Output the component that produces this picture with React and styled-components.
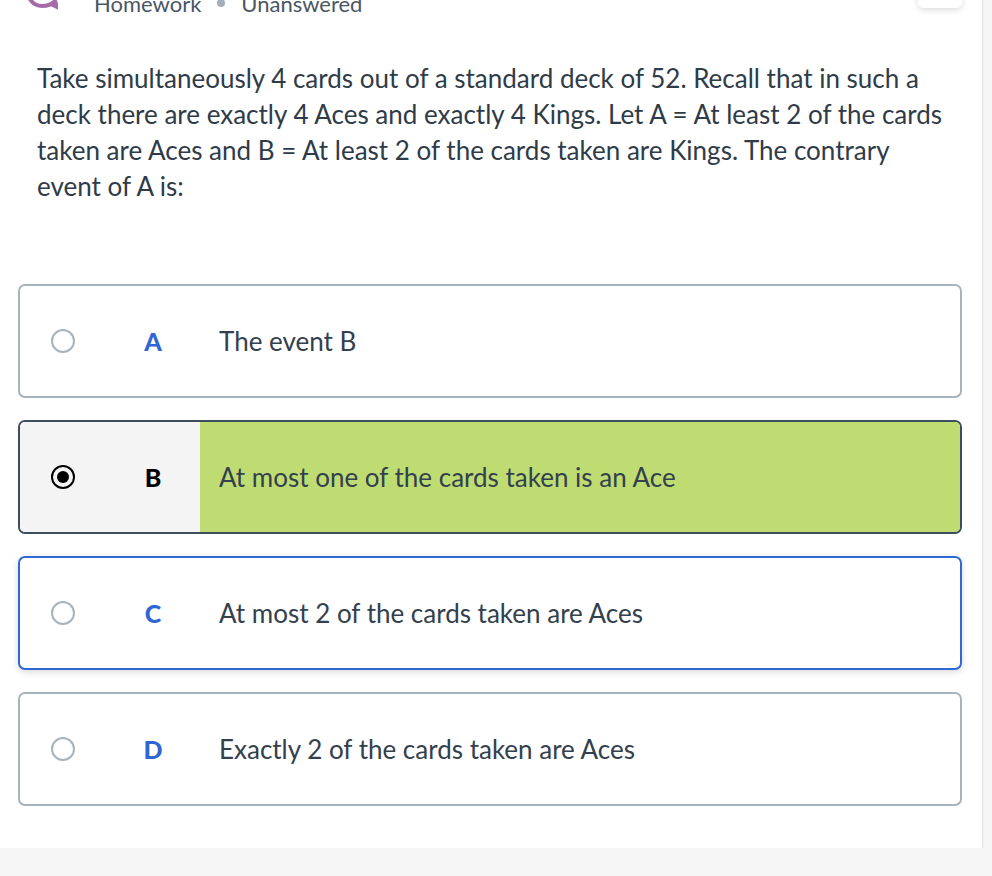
import React from 'react'
import styled, { createGlobalStyle } from 'styled-components'

const GlobalStyle = createGlobalStyle`
  html, body {
    margin: 0;
    padding: 0;
    background: #f6f6f6;
    font-family: Lato, "Open Sans", sans-serif;
  }
`

const Page = styled.div`
  width: 982px;
  height: 848px;
  background: #ffffff;
  box-shadow: 1px 0 2px rgba(0, 0, 0, 0.08);
  overflow: hidden;
  display: flex;
  flex-direction: column;
`

const Header = styled.div`
  display: flex;
  align-items: center;
  height: 28px;
  margin-top: -11px;
  padding: 0 20px 0 24px;
`

const Avatar = styled.div`
  width: 34px;
  height: 30px;
  margin-top: -12px;
  margin-right: 36px;
  display: flex;
`

const Meta = styled.div`
  display: flex;
  align-items: center;
  gap: 16px;
  font-size: 22px;
  color: #4a5664;
  flex: 1;
`

const Dot = styled.span`
  width: 8px;
  height: 8px;
  border-radius: 50%;
  background: #a4afba;
`

const TopButton = styled.div`
  width: 44px;
  height: 34px;
  margin-top: -24px;
  border-radius: 5px;
  background: #fff;
  box-shadow: 0 2px 6px rgba(0, 0, 0, 0.14);
`

const Question = styled.p`
  margin: 43px 37px 0 37px;
  font-size: 26px;
  line-height: 36px;
  color: #2f3b48;
`

const Options = styled.div`
  display: flex;
  flex-direction: column;
  gap: 22px;
  margin: 80px 20px 0 18px;
`

const Card = styled.div`
  display: grid;
  grid-template-columns: 180px 1fr;
  height: 114px;
  box-sizing: border-box;
  border: 2px solid
    ${p =>
      p.$state === 'selected' ? '#3e4d5d' : p.$state === 'focus' ? '#3068d6' : '#a9b3bc'};
  border-radius: 7px;
  overflow: hidden;
  box-shadow: ${p => (p.$state === 'focus' ? '0 2px 7px rgba(0,0,0,0.16)' : 'none')};
  background: #fff;
`

const Lead = styled.div`
  display: flex;
  align-items: center;
  background: ${p => (p.$selected ? '#f4f4f4' : 'transparent')};
`

const Radio = styled.span`
  box-sizing: border-box;
  width: 24px;
  height: 24px;
  margin-left: 31px;
  border-radius: 50%;
  border: 2.5px solid ${p => (p.$checked ? '#000' : '#a9b3bc')};
  display: flex;
  align-items: center;
  justify-content: center;
  &::after {
    content: '';
    display: ${p => (p.$checked ? 'block' : 'none')};
    width: 12px;
    height: 12px;
    border-radius: 50%;
    background: #000;
  }
`

const Letter = styled.span`
  width: 24px;
  margin-left: 66px;
  text-align: center;
  font-size: 25px;
  font-weight: 900;
  color: ${p => (p.$selected ? '#000' : '#2f66d3')};
`

const Answer = styled.div`
  display: flex;
  align-items: center;
  padding-left: 19px;
  font-size: 26px;
  color: #33404d;
  background: ${p => (p.$selected ? '#bedc72' : 'transparent')};
`

const options = [
  { key: 'A', text: 'The event B' },
  { key: 'B', text: 'At most one of the cards taken is an Ace', state: 'selected' },
  { key: 'C', text: 'At most 2 of the cards taken are Aces', state: 'focus' },
  { key: 'D', text: 'Exactly 2 of the cards taken are Aces' },
]

const App = () => {
  return (
    <>
      <GlobalStyle />
      <Page>
        <Header>
          <Avatar>
            <svg width="34" height="30" viewBox="0 0 34 30">
              <path d="M3 4 C3 18 10 24 18 24 C24 24 28 22 31 19 L33 25 L27 22"
                fill="none" stroke="#a46ba8" strokeWidth="4" strokeLinecap="round" />
            </svg>
          </Avatar>
          <Meta>
            <span>Homework</span>
            <Dot />
            <span>Unanswered</span>
          </Meta>
          <TopButton />
        </Header>
        <Question>
          Take simultaneously 4 cards out of a standard deck of 52. Recall that in such a<br />
          deck there are exactly 4 Aces and exactly 4 Kings. Let A = At least 2 of the cards<br />
          taken are Aces and B = At least 2 of the cards taken are Kings. The contrary<br />
          event of A is:
        </Question>
        <Options>
          {options.map(o => {
            const selected = o.state === 'selected'
            return (
              <Card key={o.key} $state={o.state}>
                <Lead $selected={selected}>
                  <Radio $checked={selected} />
                  <Letter $selected={selected}>{o.key}</Letter>
                </Lead>
                <Answer $selected={selected}>{o.text}</Answer>
              </Card>
            )
          })}
        </Options>
      </Page>
    </>
  )
}

export default App
